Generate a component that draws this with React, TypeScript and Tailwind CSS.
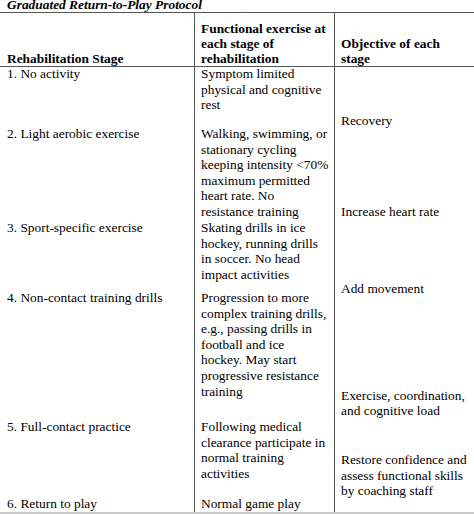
import React from "react";

type Row = {
  stage: string;
  exercise: string[];
  objective: string[];
  h: string;
  objShift: string;
};

const rows: Row[] = [
  {
    stage: "1. No activity",
    exercise: ["Symptom limited", "physical and cognitive", "rest"],
    objective: ["Recovery"],
    h: "h-[60px]",
    objShift: "-mb-[3px]",
  },
  {
    stage: "2. Light aerobic exercise",
    exercise: [
      "Walking, swimming, or",
      "stationary cycling",
      "keeping intensity <70%",
      "maximum permitted",
      "heart rate. No",
      "resistance training",
    ],
    objective: ["Increase heart rate"],
    h: "h-[94px]",
    objShift: "",
  },
  {
    stage: "3. Sport-specific exercise",
    exercise: ["Skating drills in ice", "hockey, running drills", "in soccer. No head", "impact activities"],
    objective: ["Add movement"],
    h: "h-[70px]",
    objShift: "-mb-[7px]",
  },
  {
    stage: "4. Non-contact training drills",
    exercise: [
      "Progression to more",
      "complex training drills,",
      "e.g., passing drills in",
      "football and ice",
      "hockey. May start",
      "progressive resistance",
      "training",
    ],
    objective: ["Exercise, coordination,", "and cognitive load"],
    h: "h-[129px]",
    objShift: "",
  },
  {
    stage: "5. Full-contact practice",
    exercise: ["Following medical", "clearance participate in", "normal training", "activities"],
    objective: ["Restore confidence and", "assess functional skills", "by coaching staff"],
    h: "h-[77px]",
    objShift: "-mb-[3px]",
  },
  {
    stage: "6. Return to play",
    exercise: ["Normal game play"],
    objective: [],
    h: "flex-1",
    objShift: "",
  },
];

const Lines = ({ lines }: { lines: string[] }) => (
  <>
    {lines.map((l) => (
      <div key={l} className="whitespace-nowrap">
        {l}
      </div>
    ))}
  </>
);

export default function App() {
  return (
    <div className="w-[474px] h-[514px] overflow-hidden bg-white text-black font-['Liberation_Serif',serif] text-[13.4px] flex flex-col">
      {/* caption, clipped at the top like the scan */}
      <div className="h-[13px] shrink-0 border-b border-[#555] pl-[7px] pt-[2px] leading-[6px] font-bold italic whitespace-nowrap">
        Graduated Return-to-Play Protocol
      </div>

      {/* header */}
      <div className="h-[54px] shrink-0 grid grid-cols-[195px_140px_1fr] border-b border-[#555] font-bold leading-[15px]">
        <div className="border-r border-[#555] pl-[7px] flex flex-col justify-end">
          <div>Rehabilitation Stage</div>
        </div>
        <div className="border-r border-[#555] pl-[6px] flex flex-col justify-end">
          <Lines lines={["Functional exercise at", "each stage of", "rehabilitation"]} />
        </div>
        <div className="pl-[6px] flex flex-col justify-end">
          <Lines lines={["Objective of each", "stage"]} />
        </div>
      </div>

      {/* body */}
      <div className="flex-1 flex flex-col -mt-[1px] leading-[15.6px]">
        {rows.map((r) => (
          <div key={r.stage} className={`${r.h} shrink-0 grid grid-cols-[195px_140px_1fr]`}>
            <div className="border-r border-[#555] pl-[7px] whitespace-nowrap">{r.stage}</div>
            <div className="border-r border-[#555] pl-[6px]">
              <Lines lines={r.exercise} />
            </div>
            <div className="pl-[6px] flex flex-col justify-end">
              <div className={r.objShift}>
                <Lines lines={r.objective} />
              </div>
            </div>
          </div>
        ))}
      </div>

      <div className="h-[3px] shrink-0 bg-[#c9c9c9]" />
    </div>
  );
}
